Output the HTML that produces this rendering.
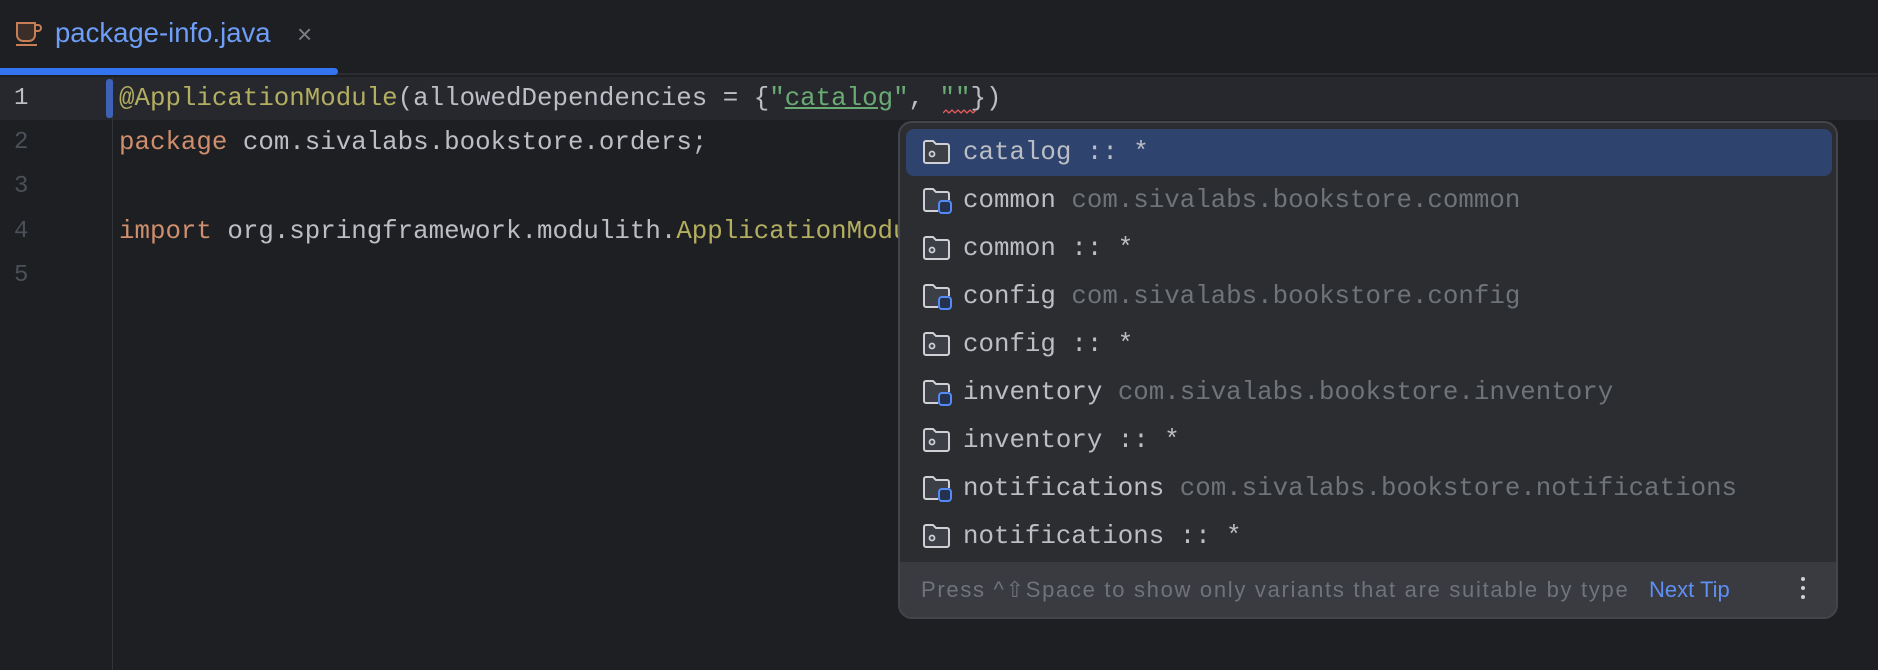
<!DOCTYPE html>
<html><head><meta charset="utf-8"><style>
html,body{margin:0;padding:0;width:1878px;height:670px;background:#1e1f22;overflow:hidden;position:relative;font-family:"Liberation Mono",monospace}
.abs{position:absolute}
.tabbar{left:0;top:0;width:1878px;height:75px;background:#1e1f22;border-bottom:2px solid #2b2d30;box-sizing:border-box}
.tabline{left:0;top:68px;width:338px;height:7px;background:#3574f0;border-radius:0 4px 4px 0}
.tabtext{left:55px;top:15px;font-family:"Liberation Sans",sans-serif;font-size:27.5px;color:#6f9ef8;line-height:36px}
.close{left:297px;top:18px;color:#7a7e85;font-family:"Liberation Sans",sans-serif;font-size:26px;line-height:32px}
.curline{left:0;top:77px;width:1878px;height:43px;background:#26282e}
.gsep{left:112px;top:77px;width:1px;height:593px;background:#313438}
.caret{left:106px;top:79px;width:7px;height:39px;background:#3d62b8;border-radius:3px}
.ln{left:14px;font-size:24px;color:#4b5059;line-height:44px}
.code{left:119px;font-size:25.8px;color:#bcbec4;line-height:44px;white-space:pre}
.kw{color:#cf8e6d}.an{color:#b3ae60}.st{color:#6aab73}
.popup{left:898px;top:121px;width:940px;height:498px;background:#2b2d30;border:2px solid #43454a;border-radius:14px;box-sizing:border-box;overflow:hidden}
.item{position:absolute;left:6px;width:926px;height:47px;border-radius:8px}
.item.sel{background:#2e436e}
.item svg{position:absolute;left:16px;top:10px}
.item .t{position:absolute;left:57px;top:0;line-height:47px;font-size:25.8px;color:#bcbec4;white-space:pre}
.g{color:#6f737a}
.footer{position:absolute;left:0;bottom:0;width:100%;height:55px;background:#393b40}
.ft{position:absolute;left:21px;top:0;line-height:55px;font-family:"Liberation Sans",sans-serif;font-size:22px;letter-spacing:1.7px;color:#6f737a;white-space:pre}
.nt{position:absolute;left:749px;top:0;line-height:55px;font-family:"Liberation Sans",sans-serif;font-size:22px;color:#5e8ff2}
.dots{position:absolute;left:901px;top:15px;width:4px}
.dots i{display:block;width:4px;height:4px;border-radius:2px;background:#ced0d6;margin-bottom:5px}
</style></head><body>
<div class="abs tabbar"></div>
<svg class="abs" style="left:15px;top:21px" width="28" height="26" viewBox="0 0 28 26"><path d="M2 2h18v12a6 6 0 0 1-6 6H8a6 6 0 0 1-6-6z" fill="#3b2e28" stroke="#c77d55" stroke-width="2"/><path d="M20 4h3a3 3 0 0 1 0 6h-3" fill="none" stroke="#c77d55" stroke-width="2"/><path d="M1 24h21" stroke="#c77d55" stroke-width="2"/></svg>
<div class="abs tabtext">package-info.java</div>
<div class="abs close">×</div>
<div class="abs tabline"></div>
<div class="abs curline"></div>
<div class="abs gsep"></div>
<div class="abs caret"></div>
<div class="abs ln" style="top:77px;color:#bcbec4">1</div>
<div class="abs ln" style="top:121px">2</div>
<div class="abs ln" style="top:165px">3</div>
<div class="abs ln" style="top:210px">4</div>
<div class="abs ln" style="top:254px">5</div>
<div class="abs code" style="top:77px"><span class="an">@ApplicationModule</span>(allowedDependencies = {<span class="st">"<u style="text-decoration-color:#6aab73">catalog</u>"</span>, <span class="st">""</span>})</div>
<svg class="abs" style="left:943px;top:109px" width="34" height="6"><path d="M0 4l3-3 3 3 3-3 3 3 3-3 3 3 3-3 3 3 3-3 3 3 3-3" fill="none" stroke="#e55b5b" stroke-width="1.3"/></svg>
<div class="abs code" style="top:121px"><span class="kw">package</span> com.sivalabs.bookstore.orders;</div>
<div class="abs code" style="top:210px"><span class="kw">import</span> org.springframework.modulith.<span class="an">ApplicationModule</span>;</div>

<div class="abs popup">
<div class="item sel" style="top:6px"><svg width="30" height="26" viewBox="0 0 30 26"><path d="M2 4a2 2 0 0 1 2-2h7l3 3h11a2 2 0 0 1 2 2v15a2 2 0 0 1-2 2H4a2 2 0 0 1-2-2z" fill="#3c3f45" stroke="#ced0d6" stroke-width="2"/><circle cx="10" cy="15" r="2.5" fill="none" stroke="#ced0d6" stroke-width="1.8"/></svg><span class="t">catalog :: *</span></div>
<div class="item" style="top:54px"><svg width="32" height="30" viewBox="0 0 32 30"><path d="M16 24H4a2 2 0 0 1-2-2V4a2 2 0 0 1 2-2h7l3 3h11a2 2 0 0 1 2 2v6" fill="#3c3f45" stroke="#ced0d6" stroke-width="2"/><rect x="17" y="14" width="12" height="12" rx="3" fill="#25324d" stroke="#548af7" stroke-width="2"/></svg><span class="t">common <span class="g">com.sivalabs.bookstore.common</span></span></div>
<div class="item" style="top:102px"><svg width="30" height="26" viewBox="0 0 30 26"><path d="M2 4a2 2 0 0 1 2-2h7l3 3h11a2 2 0 0 1 2 2v15a2 2 0 0 1-2 2H4a2 2 0 0 1-2-2z" fill="#3c3f45" stroke="#ced0d6" stroke-width="2"/><circle cx="10" cy="15" r="2.5" fill="none" stroke="#ced0d6" stroke-width="1.8"/></svg><span class="t">common :: *</span></div>
<div class="item" style="top:150px"><svg width="32" height="30" viewBox="0 0 32 30"><path d="M16 24H4a2 2 0 0 1-2-2V4a2 2 0 0 1 2-2h7l3 3h11a2 2 0 0 1 2 2v6" fill="#3c3f45" stroke="#ced0d6" stroke-width="2"/><rect x="17" y="14" width="12" height="12" rx="3" fill="#25324d" stroke="#548af7" stroke-width="2"/></svg><span class="t">config <span class="g">com.sivalabs.bookstore.config</span></span></div>
<div class="item" style="top:198px"><svg width="30" height="26" viewBox="0 0 30 26"><path d="M2 4a2 2 0 0 1 2-2h7l3 3h11a2 2 0 0 1 2 2v15a2 2 0 0 1-2 2H4a2 2 0 0 1-2-2z" fill="#3c3f45" stroke="#ced0d6" stroke-width="2"/><circle cx="10" cy="15" r="2.5" fill="none" stroke="#ced0d6" stroke-width="1.8"/></svg><span class="t">config :: *</span></div>
<div class="item" style="top:246px"><svg width="32" height="30" viewBox="0 0 32 30"><path d="M16 24H4a2 2 0 0 1-2-2V4a2 2 0 0 1 2-2h7l3 3h11a2 2 0 0 1 2 2v6" fill="#3c3f45" stroke="#ced0d6" stroke-width="2"/><rect x="17" y="14" width="12" height="12" rx="3" fill="#25324d" stroke="#548af7" stroke-width="2"/></svg><span class="t">inventory <span class="g">com.sivalabs.bookstore.inventory</span></span></div>
<div class="item" style="top:294px"><svg width="30" height="26" viewBox="0 0 30 26"><path d="M2 4a2 2 0 0 1 2-2h7l3 3h11a2 2 0 0 1 2 2v15a2 2 0 0 1-2 2H4a2 2 0 0 1-2-2z" fill="#3c3f45" stroke="#ced0d6" stroke-width="2"/><circle cx="10" cy="15" r="2.5" fill="none" stroke="#ced0d6" stroke-width="1.8"/></svg><span class="t">inventory :: *</span></div>
<div class="item" style="top:342px"><svg width="32" height="30" viewBox="0 0 32 30"><path d="M16 24H4a2 2 0 0 1-2-2V4a2 2 0 0 1 2-2h7l3 3h11a2 2 0 0 1 2 2v6" fill="#3c3f45" stroke="#ced0d6" stroke-width="2"/><rect x="17" y="14" width="12" height="12" rx="3" fill="#25324d" stroke="#548af7" stroke-width="2"/></svg><span class="t">notifications <span class="g">com.sivalabs.bookstore.notifications</span></span></div>
<div class="item" style="top:390px"><svg width="30" height="26" viewBox="0 0 30 26"><path d="M2 4a2 2 0 0 1 2-2h7l3 3h11a2 2 0 0 1 2 2v15a2 2 0 0 1-2 2H4a2 2 0 0 1-2-2z" fill="#3c3f45" stroke="#ced0d6" stroke-width="2"/><circle cx="10" cy="15" r="2.5" fill="none" stroke="#ced0d6" stroke-width="1.8"/></svg><span class="t">notifications :: *</span></div>
<div class="footer"><span class="ft">Press ^⇧Space to show only variants that are suitable by type</span><span class="nt">Next Tip</span><div class="dots"><i></i><i></i><i></i></div></div>
</div>
</body></html>
